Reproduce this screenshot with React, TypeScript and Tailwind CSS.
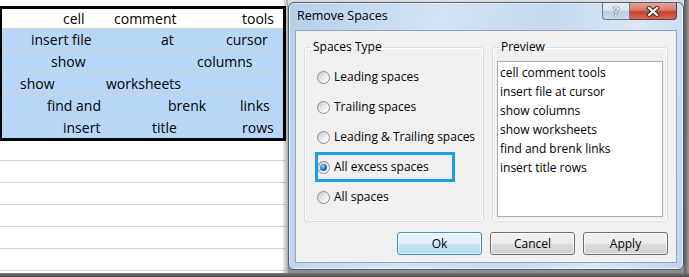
const ui = "font-['Open_Sans','Noto_Sans',sans-serif]";

type Word = { w: string; text: string };
type Row = { pl: string; h: string; bg: string; words: Word[] };

const sheetRows: Row[] = [
  { pl: 'pl-[61px]', h: 'h-[20px]', bg: 'bg-white', words: [{ w: 'w-[51px]', text: 'cell' }, { w: 'w-[128px]', text: 'comment' }, { w: '', text: 'tools' }] },
  { pl: 'pl-[29px]', h: 'h-[22px]', bg: 'bg-[#b8d7f8]', words: [{ w: 'w-[130px]', text: 'insert file' }, { w: 'w-[65px]', text: 'at' }, { w: '', text: 'cursor' }] },
  { pl: 'pl-[49px]', h: 'h-[22px]', bg: 'bg-[#b8d7f8]', words: [{ w: 'w-[146px]', text: 'show' }, { w: '', text: 'columns' }] },
  { pl: 'pl-[18px]', h: 'h-[22px]', bg: 'bg-[#b8d7f8]', words: [{ w: 'w-[86px]', text: 'show' }, { w: '', text: 'worksheets' }] },
  { pl: 'pl-[45px]', h: 'h-[22px]', bg: 'bg-[#b8d7f8]', words: [{ w: 'w-[121px]', text: 'find and' }, { w: 'w-[72px]', text: 'brenk' }, { w: '', text: 'links' }] },
  { pl: 'pl-[61px]', h: 'h-[21px]', bg: 'bg-[#b8d7f8]', words: [{ w: 'w-[89px]', text: 'insert' }, { w: 'w-[90px]', text: 'title' }, { w: '', text: 'rows' }] },
];

const options = ['Leading spaces', 'Trailing spaces', 'Leading & Trailing spaces', 'All excess spaces', 'All spaces'];
const previewLines = ['cell comment tools', 'insert file at cursor', 'show columns', 'show worksheets', 'find and brenk links', 'insert title rows'];

const Radio = ({ checked }: { checked?: boolean }) => (
  <span className="w-[13px] h-[13px] shrink-0 rounded-full border border-[#8c8c8c] bg-[linear-gradient(135deg,#c8c8c8,#efefef_60%,#ffffff)] flex items-center justify-center">
    {checked && (
      <span className="w-[7px] h-[7px] rounded-full bg-[radial-gradient(circle_at_40%_35%,#8fdcff_0%,#2a86cf_45%,#0c3d70_100%)]" />
    )}
  </span>
);

const Sheet = () => (
  <div className={`w-[288px] h-full bg-white pt-[6px] relative text-[14px] text-black ${ui}`}>
    <div className="w-[286px] border-black border-t-[3px] border-l-2 border-r-[3px] border-b-[3px]">
      {sheetRows.map((row, i) => (
        <div key={i} className={`flex items-center ${row.pl} ${row.h} ${row.bg} ${i < sheetRows.length - 1 ? 'border-b border-[#d2d2d2]' : ''}`}>
          {row.words.map((wd, j) => (
            <span key={j} className={`${wd.w} shrink-0 whitespace-nowrap leading-none`}>
              {wd.text}
            </span>
          ))}
        </div>
      ))}
    </div>
    <div className="w-[286px]">
      <div className="h-[20px] border-b border-[#d4d4d4]" />
      {[0, 1, 2, 3, 4].map((i) => (
        <div key={i} className="h-[22px] border-b border-[#d4d4d4]" />
      ))}
    </div>
    <div className="absolute right-0 top-0 bottom-0 w-[6px] bg-[linear-gradient(90deg,rgba(0,0,0,0),rgba(0,0,0,0.35))]" />
  </div>
);

const Button = ({ label, primary }: { label: string; primary?: boolean }) => (
  <button
    className={`w-[85px] h-[23px] rounded-[3px] border text-[12px] text-black ${ui} ${
      primary
        ? 'border-[#3c8fd0] bg-[linear-gradient(180deg,#eaf5fc_0%,#dcedf9_50%,#c4e2f6_51%,#b8daf3_100%)]'
        : 'border-[#707070] bg-[linear-gradient(180deg,#f2f2f2_0%,#ebebeb_50%,#dddddd_51%,#cfcfcf_100%)]'
    } shadow-[inset_0_0_0_1px_rgba(255,255,255,0.7)]`}
  >
    {label}
  </button>
);

const Dialog = () => (
  <div className={`w-[396px] h-[268px] mt-[2px] rounded-[6px] border border-[#4d5f78] bg-[linear-gradient(100deg,#b7cfea_0%,#d3e3f4_35%,#c4d8ee_60%,#d9e7f6_80%,#bdd4ed_100%)] shadow-[inset_0_0_0_1px_rgba(255,255,255,0.6)] flex flex-col px-[6px] pb-[6px] ${ui}`}>
    <div className="h-[27px] flex items-start shrink-0">
      <div className="flex-1 h-full flex items-center pl-[2px] text-[12.5px] text-black">Remove Spaces</div>
      <div className="flex">
        <div className="w-[28px] h-[17px] rounded-bl-[4px] border border-t-0 border-[#6a7d98] bg-[linear-gradient(180deg,#e9eff7_0%,#d4e0ee_50%,#bccde3_51%,#cbdaec_100%)] flex items-center justify-center text-[13px] font-bold leading-none text-[#f4f4f4] [text-shadow:0_0_1px_#333,0_0_1px_#333]">
          ?
        </div>
        <div className="w-[47px] h-[17px] rounded-br-[4px] border border-t-0 border-l-0 border-[#6b3a3a] bg-[linear-gradient(180deg,#e8a496_0%,#d77868_45%,#c7402c_55%,#d46a55_100%)] flex items-center justify-center">
          <svg width="14" height="11" viewBox="0 0 14 11">
            <path d="M3 2 L11 9 M11 2 L3 9" stroke="#3b2a2a" strokeWidth="4.2" strokeLinecap="square" />
            <path d="M3 2 L11 9 M11 2 L3 9" stroke="#ffffff" strokeWidth="2.2" strokeLinecap="square" />
          </svg>
        </div>
      </div>
    </div>
    <div className="flex-1 border border-[#8ea4c2] bg-[#f0f0f0] px-[8px] pt-[8px] flex flex-col">
      <div className="flex gap-[8px]">
        <fieldset className="w-[180px] h-[183px] border border-[#d5dfe5] rounded-[3px] shadow-[inset_0_0_0_1px_#ffffff]">
          <legend className="ml-[6px] px-[2px] text-[12px] leading-[16px] text-black">Spaces Type</legend>
          <div className="pt-[7px]">
            {options.map((opt, i) => (
              <div key={opt} className="relative h-[30px] flex items-center pl-[12px] gap-[4px] text-[12px] text-black whitespace-nowrap">
                <Radio checked={i === 3} />
                <span>{opt}</span>
                {i === 3 && <div className="absolute left-[10px] top-0 w-[140px] h-[30px] border-[3px] border-[#1ba1e2]" />}
              </div>
            ))}
          </div>
        </fieldset>
        <fieldset className="flex-1 h-[183px] border border-[#d5dfe5] rounded-[3px] shadow-[inset_0_0_0_1px_#ffffff] px-[4px] pt-[6px]">
          <legend className="ml-[2px] px-[2px] text-[12px] leading-[16px] text-black">Preview</legend>
          <div className="h-[156px] border border-[#abadb3] bg-white pl-[2px] pt-[1px] text-[12px] leading-[19px] text-black">
            {previewLines.map((l) => (
              <div key={l} className="whitespace-nowrap">{l}</div>
            ))}
          </div>
        </fieldset>
      </div>
      <div className="flex justify-end gap-[8px] mt-[10px]">
        <Button label="Ok" primary />
        <Button label="Cancel" />
        <Button label="Apply" />
      </div>
    </div>
  </div>
);

export default function App() {
  return (
    <div className="w-[689px] h-[277px] overflow-hidden flex flex-col bg-[#5e5e5e]">
      <div className="flex h-[273px]">
        <Sheet />
        <div className="w-[396px] h-full bg-[linear-gradient(180deg,#dcdcdc_0%,#bdbdbd_90%,#8a8a8a_100%)]">
          <Dialog />
        </div>
        <div className="flex-1 h-full bg-[linear-gradient(90deg,#5a5a5a,#9a9a9a)]" />
      </div>
      <div className="h-[4px] bg-[linear-gradient(180deg,#7a7a7a,#4a4a4a)]" />
    </div>
  );
}
